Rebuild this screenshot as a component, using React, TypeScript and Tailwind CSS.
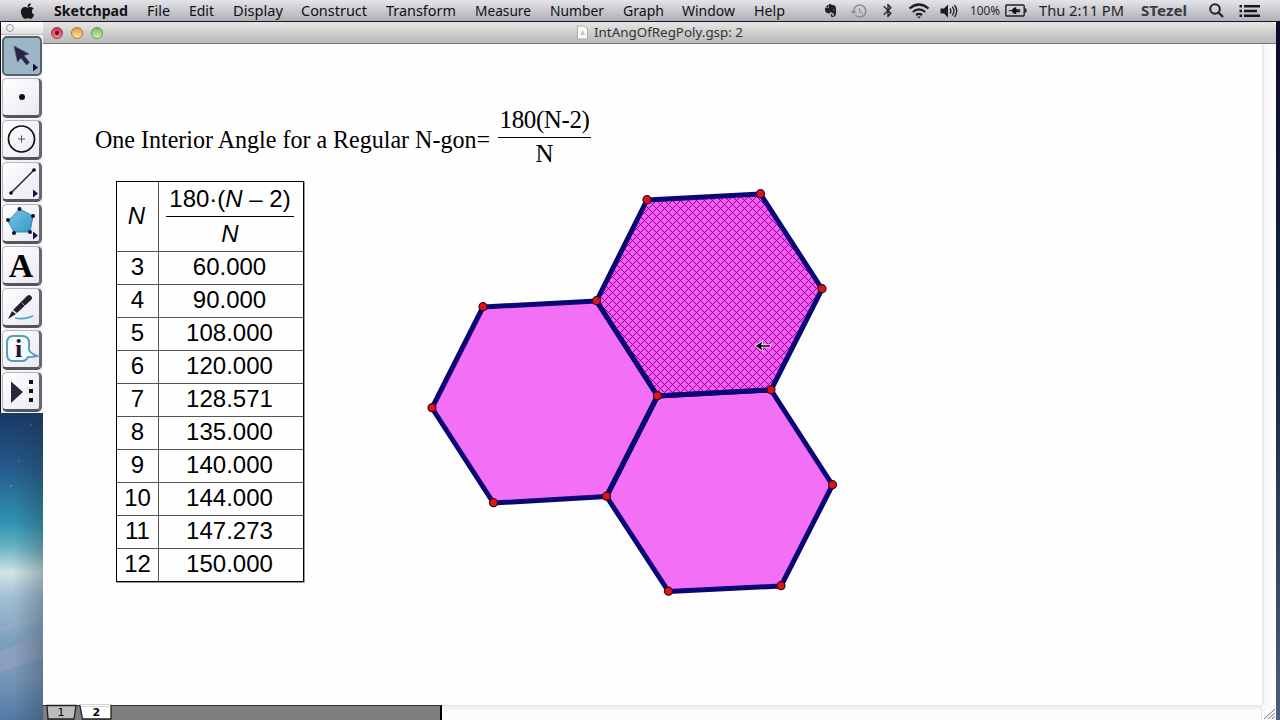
import React from 'react';
import { FaApple, FaEvernote } from 'react-icons/fa';
import { MdBluetooth, MdHistory } from 'react-icons/md';

const menus = [
  { label: 'File', box: 'w-[42px]', text: 23 },
  { label: 'Edit', box: 'w-[44px]', text: 25 },
  { label: 'Display', box: 'w-[68px]', text: 50 },
  { label: 'Construct', box: 'w-[85px]', text: 66 },
  { label: 'Transform', box: 'w-[89px]', text: 70 },
  { label: 'Measure', box: 'w-[75px]', text: 56 },
  { label: 'Number', box: 'w-[73px]', text: 54 },
  { label: 'Graph', box: 'w-[59px]', text: 41 },
  { label: 'Window', box: 'w-[72px]', text: 53 },
  { label: 'Help', box: 'w-[40px]', text: 31 },
];

const rows = [
  ['3', '60.000'],
  ['4', '90.000'],
  ['5', '108.000'],
  ['6', '120.000'],
  ['7', '128.571'],
  ['8', '135.000'],
  ['9', '140.000'],
  ['10', '144.000'],
  ['11', '147.273'],
  ['12', '150.000'],
];

const hexagons = [
  { points: '647,200 760.5,194 822,289 771,390 657.5,396 596.5,301', hatched: true },
  { points: '483,307 596.5,301 657.5,396 606.5,496.5 493.5,503 432,408', hatched: false },
  { points: '657.5,396 771,390 832.5,485 781,586 668.5,591.5 606.5,496.5', hatched: false },
];

const vertices = [
  [647, 200], [760.5, 194], [822, 289], [771, 390], [657.5, 396], [596.5, 301],
  [483, 307], [432, 408], [493.5, 503], [606.5, 496.5],
  [832.5, 485], [781, 586], [668.5, 591.5],
];

const MenuText: React.FC<{ text: string; width: number; bold?: boolean; size?: number; color?: string }> = ({ text, width, bold, size = 14, color = '#111' }) => (
  <svg width={width + 2} height="22" className="block overflow-visible">
    <text x="0" y={size < 14 ? 14.5 : 15.5} textLength={width} lengthAdjust="spacingAndGlyphs" fontSize={size} fontWeight={bold ? 700 : 400} fill={color} fontFamily='"Noto Sans", "Open Sans", sans-serif'>{text}</text>
  </svg>
);

const MenuBar = () => (
  <header className="flex h-[22px] shrink-0 items-center border-b border-[#15151c] bg-linear-to-b from-[#e4e4e8] to-[#b0b0b8]">
    <div className="w-[54px] pl-[19px]">
      <FaApple className="h-[18px] w-[17px] text-[#18181a]" />
    </div>
    <div className="w-[93px]"><MenuText text="Sketchpad" width={74} bold /></div>
    {menus.map((m) => (
      <div key={m.label} className={m.box}><MenuText text={m.label} width={m.text} /></div>
    ))}
    <div className="flex flex-1 items-center pl-[29px] text-[#202026]">
      <FaEvernote className="mr-[12px] h-[15px] w-[15px]" />
      <MdHistory className="mr-[12px] h-[18px] w-[18px] text-[#8b8b92]" />
      <MdBluetooth className="mr-[12px] h-[17px] w-[16px]" />
      <svg className="mr-[10px] block" width="22" height="17" viewBox="0 0 22 17" fill="none" stroke="#1c1c22" strokeWidth="2.2">
        <path d="M1.5 6.5Q11-1.5 20.500 6.500M4.800 10Q11 4.800 17.200 10M8 13Q11 10.800 14 13" />
        <path d="M9.200 14.500h3.600L11 16.500z" fill="#1c1c22" stroke="none" />
      </svg>
      <svg className="mr-[12px] block" width="18" height="16" viewBox="0 0 18 16">
        <path d="M0.500 5.500h3.500l4-4v13l-4-4h-3.500z" fill="#1c1c22" />
        <path d="M10 5.500q1.800 2.500 0 5M12.300 3.700q3.200 4.300 0 8.600M14.500 2q4.400 6 0 12" fill="none" stroke="#1c1c22" strokeWidth="1.300" />
      </svg>
      <MenuText text="100%" width={30} size={12} color="#2a2a30" />
      <svg className="ml-[3px] mr-[12px] block" width="22" height="13" viewBox="0 0 22 13">
        <rect x="0.800" y="1" width="18.400" height="11" rx="1" fill="none" stroke="#222228" strokeWidth="1.400" />
        <rect x="20" y="4.500" width="1.500" height="4" fill="#222228" />
        <path d="M4 6.500h3q1-3 4-3v2h4v0.800h-3v0.800h3v0.800h-4v2q-3 0-4-3h-3z" fill="#111" stroke="#111" strokeWidth="0.500" />
      </svg>
      <div className="w-[102px]"><MenuText text="Thu 2:11 PM" width={85} color="#222228" /></div>
      <div className="w-[67px]"><MenuText text="STezel" width={46} bold color="#3a3a44" /></div>
      <svg className="mr-[14px] block" width="17" height="17" viewBox="0 0 17 17" fill="none" stroke="#222228" strokeWidth="2">
        <circle cx="7" cy="7" r="4.800" />
        <path d="M10.500 10.500l4.500 4.500" strokeWidth="2.300" />
      </svg>
      <svg className="block" width="22" height="14" viewBox="0 0 22 14" fill="#18181c">
        <path d="M0.500 1h2.500v2.500h-2.500zM0.500 5.800h2.500v2.500h-2.500zM0.500 10.500h2.500v2.500h-2.500zM5 1h16v2.500h-16zM5 5.800h13v2.500h-13zM5 10.500h16v2.500h-16z" />
      </svg>
    </div>
  </header>
);

const Flyout = () => <path d="M33 28.500l5 4-5 4z" fill="#141440" />;

const tools = [
  {
    name: 'arrow', active: true,
    art: <><path d="M14 11l3.500 16 3.500-4 5.500 7 3-2.500-5.500-7 5-1.500z" fill="#292346" stroke="#55557a" strokeWidth="0.800" /><Flyout /></>,
  },
  { name: 'point', art: <circle cx="22" cy="20" r="3" fill="#111" /> },
  {
    name: 'compass',
    art: <><circle cx="21.500" cy="20" r="13" fill="none" stroke="#111" strokeWidth="1.700" /><path d="M21.500 16.500v7M18 20h7" stroke="#555" /></>,
  },
  {
    name: 'straightedge',
    art: <><path d="M11 32L34 9" stroke="#222" strokeWidth="1.400" /><circle cx="11" cy="32" r="1.800" /><circle cx="34" cy="9" r="1.800" /><Flyout /></>,
  },
  {
    name: 'polygon',
    art: (
      <>
        <path d="M19.500 6L33 13l-3 16H14L8 18z" fill="url(#pentagon)" stroke="#348bb2" />
        <g fill="#14142c"><circle cx="19.500" cy="6" r="2" /><circle cx="33" cy="13" r="2" /><circle cx="30" cy="29" r="2" /><circle cx="14" cy="30" r="2" /><circle cx="8" cy="17" r="2" /></g>
        <Flyout />
      </>
    ),
  },
  { name: 'text', label: 'A', art: null },
  {
    name: 'marker',
    art: (
      <>
        <path d="M13 23L27 9q2-2 4 0t0 4L17 26z" fill="#24202e" />
        <path d="M12 24l4 3-8 5z" fill="#24202e" />
        <path d="M22 16l4 4M13 23l4 4" stroke="#ddd" strokeWidth="0.700" />
        <path d="M15 31q9 2 18-2" fill="none" stroke="#4ba3c7" strokeWidth="1.600" />
      </>
    ),
  },
  {
    name: 'info', label: 'i',
    art: <path d="M13 7h9q7 0 7 7v7q1 3 8 6-5 1.500-9 1-2 4-6 4h-9q-6 0-6-7v-11q0-7 6-7z" fill="#f8fbfd" stroke="#559fbd" strokeWidth="2" />,
  },
  {
    name: 'custom',
    art: <><path d="M11 10.500L23 21 11 32z" fill="#29253a" /><path d="M29 9h4v4h-4zM29 18h4v4h-4zM29 27h4v4h-4z" fill="#111" /></>,
  },
];

const Toolbox = () => (
  <aside className="h-[391px] w-[43px] border-l border-[#111] bg-[#f4f4f6]">
    <div className="flex h-[13px] items-center border-b border-[#bbb] bg-linear-to-b from-white to-[#dedede] pl-[5px]">
      <div className="h-[8px] w-[8px] rounded-full border border-[#999] bg-[#eee]" />
    </div>
    {tools.map((t) => (
      <button
        key={t.name}
        type="button"
        className={
          t.active
            ? 'mb-[2px] ml-px mt-px block h-[40px] w-[40px] rounded-[5px] border-2 border-[#53626c] bg-[#9cb6c6]'
            : 'mb-[2px] ml-px block h-[40px] w-[40px] rounded-[5px] border border-b-[3px] border-r-[3px] border-[#b5b5bb] border-b-[#55555b] border-r-[#66666c] bg-linear-to-br from-white to-[#e9e9f2]'
        }
      >
        <svg viewBox="2 1 40 40" className={t.active ? '-ml-[2px] -mt-[2px] block h-[40px] w-[40px]' : '-ml-px -mt-px block h-[40px] w-[40px]'}>
          <defs>
            <linearGradient id="pentagon" x1="0" y1="0" x2="1" y2="1">
              <stop offset="0" stopColor="#80c6e5" />
              <stop offset="1" stopColor="#3298c8" />
            </linearGradient>
          </defs>
          {t.art}
          {t.label === 'A' && <text x="21" y="32" textAnchor="middle" fontSize="34" fontWeight="700" fontFamily='"Liberation Serif", serif'>A</text>}
          {t.label === 'i' && <text x="18.500" y="28" textAnchor="middle" fontSize="26" fontWeight="700" fill="#191933" fontFamily='"Liberation Serif", serif'>i</text>}
        </svg>
      </button>
    ))}
  </aside>
);

const TitleBar = () => (
  <div className="flex h-[22px] shrink-0 items-center rounded-tr-[5px] border-b border-[#777] bg-linear-to-b from-[#e6e6e6] to-[#b9b9b9] pl-[8px]">
    <div className="flex w-[525px] gap-[8px]">
      <div className="flex h-[12px] w-[12px] items-center justify-center rounded-full border border-[#91394a] bg-linear-to-b from-[#c9364d] to-[#ff8290]">
        <div className="h-1 w-1 rounded-full bg-[#710011]" />
      </div>
      <div className="h-[12px] w-[12px] rounded-full border border-[#a87738] bg-linear-to-b from-[#dd9c45] to-[#ffe594]" />
      <div className="h-[12px] w-[12px] rounded-full border border-[#659957] bg-linear-to-b from-[#79bb65] to-[#c9f5ae]" />
    </div>
    <svg width="13" height="15" viewBox="0 0 13 15" className="mr-[5px] block">
      <path d="M1.500 1h7l3 3v10h-10z" fill="#fafafa" stroke="#aaa" />
      <path d="M4 10l3-5 2 5z" fill="#b7d4b8" />
    </svg>
    <svg width="150" height="21" className="block overflow-visible">
      <text x="0" y="15" textLength="149" lengthAdjust="spacingAndGlyphs" fontSize="13" fill="#333" fontFamily='"Noto Sans", sans-serif'>IntAngOfRegPoly.gsp: 2</text>
    </svg>
  </div>
);

const AngleTable = () => (
  <table className="h-[401px] w-[188px] table-fixed border-separate border-spacing-0 border border-black font-['Liberation_Sans',Arial,sans-serif] text-[24px] leading-[28px] text-black shadow-[0.5px_0.5px_0_#333]">
    <tbody>
      <tr className="h-[69px]">
        <td className="w-[42px] border-r border-[#555] p-0 pr-[2px] pb-[2px] text-center italic">N</td>
        <td className="p-0 pl-[7px] pr-[9px] align-top">
          <div className="h-[35px] border-b border-black pt-[3px] text-center whitespace-nowrap">180·(<i>N</i> – 2)</div>
          <div className="h-[33px] pt-[3px] text-center italic">N</div>
        </td>
      </tr>
      {rows.map(([n, angle]) => (
        <tr key={n} className="h-[33px]">
          <td className="border-t border-r border-[#555] p-0 pb-[2px] text-center">{n}</td>
          <td className="border-t border-[#555] p-0 pr-[3px] pb-[2px] text-center">{angle}</td>
        </tr>
      ))}
    </tbody>
  </table>
);

const Tiling = () => (
  <svg width="430" height="430" viewBox="420 181 430 430" className="ml-[116px] block">
    <defs>
      {/* selection hatch, one pixel per step so that the lines stay crisp */}
      <pattern id="hatch" width="8" height="8" patternUnits="userSpaceOnUse">
        <path
          d="M0 0h1v1h-1zM1 1h1v1h-1zM2 2h1v1h-1zM3 3h1v1h-1zM4 4h1v1h-1zM5 5h1v1h-1zM6 6h1v1h-1zM7 7h1v1h-1zM1 7h1v1h-1zM2 6h1v1h-1zM3 5h1v1h-1zM5 3h1v1h-1zM6 2h1v1h-1zM7 1h1v1h-1z"
          fill="#80087f"
          shapeRendering="crispEdges"
        />
      </pattern>
    </defs>
    {hexagons.map((h) => (
      <g key={h.points}>
        <polygon points={h.points} fill={h.hatched ? '#fb5bfb' : '#f36ff6'} />
        {h.hatched && <polygon points={h.points} fill="url(#hatch)" />}
      </g>
    ))}
    {hexagons.map((h) => (
      <polygon key={h.points} points={h.points} fill="none" stroke="#0b0675" strokeWidth="5" strokeLinejoin="round" />
    ))}
    {vertices.map(([x, y]) => (
      <circle key={`${x}-${y}`} cx={x} cy={y - 0.3} r="4" fill="#dc131b" stroke="#3b0815" strokeWidth="1.200" />
    ))}
    <path d="M755.500 346l7-4.500-1.500 3.700h9v1.600h-9l1.500 3.700z" fill="#000" stroke="#fff" strokeWidth="1.500" paintOrder="stroke" />
  </svg>
);

const Sketch = () => (
  <main className="min-w-0 flex-1 overflow-hidden bg-[#fefefe]">
    <div className="flex h-[137px] pl-[52px] pt-[61px] font-['Liberation_Serif','Times_New_Roman',serif] text-[25px] leading-[28px] text-black">
      <svg width="403" height="60" className="block shrink-0 overflow-visible">
        <text x="0" y="42.500" textLength="395" lengthAdjust="spacingAndGlyphs">One Interior Angle for a Regular N-gon=</text>
      </svg>
      <div className="w-[93px] text-center">
        <div className="h-[33px] border-b border-black pt-px tracking-[-0.4px]">180(N-2)</div>
        <div className="pt-[2px]">N</div>
      </div>
    </div>
    <div className="flex pl-[73px]">
      <AngleTable />
      <Tiling />
    </div>
  </main>
);

const PageTabs = () => (
  <footer className="flex h-[15px] shrink-0 bg-[#f7f7f7]">
    <div className="w-[399px] border-r-2 border-t border-black border-t-[#333] bg-[#7e7e7e]">
      <svg width="80" height="14" className="block overflow-visible">
        <path d="M4 -0.500h29l-2 13.500h-26z" fill="#bdbdbd" stroke="#222" strokeWidth="1.300" />
        <path d="M37 -0.500h31v13.500h-28.500z" fill="#fff" stroke="#222" strokeWidth="1.300" />
        <path d="M37.500 -0.500h30" stroke="#fff" strokeWidth="1.500" />
        <text x="14.500" y="10" fontSize="11" fontFamily='"DejaVu Sans", sans-serif'>1</text>
        <text x="49.500" y="10" fontSize="11" fontWeight="700" fontFamily='"DejaVu Sans", sans-serif'>2</text>
      </svg>
    </div>
    <div className="flex-1 bg-linear-to-b from-[#e7e7e7] to-[#fcfcfc] to-40%" />
    <svg width="15" height="15" className="block border-l border-[#e3e3e3] bg-[#fafafa]">
      <path d="M2 14L13 4M6 14L13 8M10 14L13 11.500" stroke="#777" />
    </svg>
  </footer>
);

export default function App() {
  return (
    <div className="flex h-[720px] w-[1280px] flex-col overflow-hidden">
      <MenuBar />
      <div className="flex min-h-0 flex-1">
        <div className="flex w-[43px] flex-col">
          <Toolbox />
          <div className="flex-1 overflow-hidden">
            <svg width="43" height="307" viewBox="0 0 43 307" preserveAspectRatio="none" className="block">
              <defs>
                <linearGradient id="sky" x1="0" y1="0" x2="0" y2="1">
                  <stop offset="0" stopColor="#173965" />
                  <stop offset="0.180" stopColor="#245a8c" />
                  <stop offset="0.360" stopColor="#3095b3" />
                  <stop offset="0.440" stopColor="#6bb5c4" />
                  <stop offset="0.520" stopColor="#d0e4e8" />
                  <stop offset="0.600" stopColor="#a1bfd2" />
                  <stop offset="0.750" stopColor="#7c9fbf" />
                  <stop offset="0.860" stopColor="#7797b7" />
                  <stop offset="1" stopColor="#5379a4" />
                </linearGradient>
                <linearGradient id="shade">
                  <stop offset="0.300" stopColor="#24323c" stopOpacity="0" />
                  <stop offset="1" stopColor="#24323c" stopOpacity="0.300" />
                </linearGradient>
              </defs>
              <rect width="43" height="307" fill="url(#sky)" />
              <path d="M0 215l43-14v5L0 219zM0 239l43-19v25L0 259z" fill="#b5a8c8" opacity="0.300" />
              <rect width="43" height="307" fill="url(#shade)" />
              <g fill="#86b3d5"><circle cx="11" cy="73" r="0.800" /><circle cx="19" cy="48" r="0.600" /><circle cx="31" cy="12" r="0.600" /></g>
            </svg>
          </div>
        </div>
        <section className="flex min-w-0 flex-1 flex-col">
          <TitleBar />
          <div className="flex min-h-0 flex-1">
            <Sketch />
            <div className="w-[14px] border-l-2 border-[#ebebeb] bg-linear-to-r from-[#f6f6f8] to-white" />
          </div>
          <PageTabs />
        </section>
        <div className="w-[4px] bg-linear-to-b from-[#0b0b2c] via-[#17284d] to-[#4e5f7c]" />
      </div>
    </div>
  );
}
